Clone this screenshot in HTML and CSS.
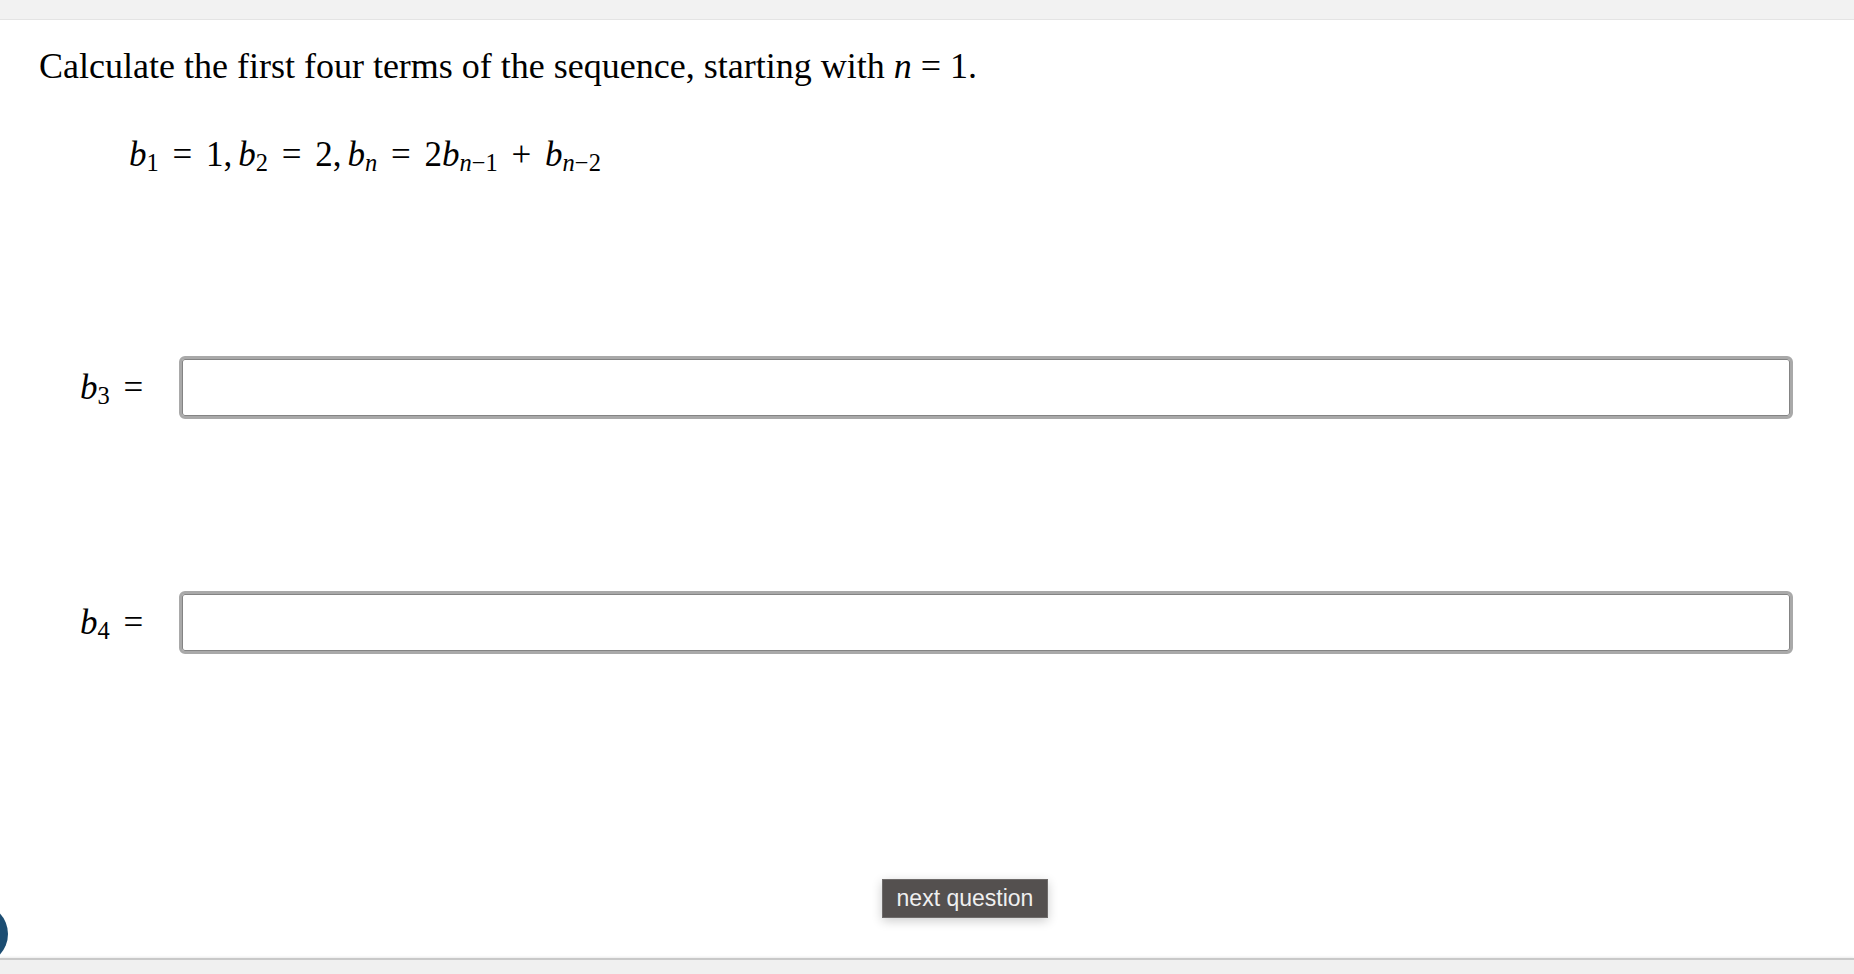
FILE: index.html
```html
<!DOCTYPE html>
<html>
<head>
<meta charset="utf-8">
<link rel="stylesheet" href="styles.css">
</head>
<body>
<div class="topbar"></div>
<main class="page">
  <p class="title">Calculate the first four terms of the sequence, starting with <i>n</i> = 1.</p>
  <p class="formula"><i>b</i><sub>1</sub> <span class="op">=</span> 1,<i class="gap">b</i><sub>2</sub> <span class="op">=</span> 2,<i class="gap">b</i><sub><i>n</i></sub> <span class="op">=</span> 2<i>b</i><sub><i>n</i>−1</sub> <span class="op">+</span> <i>b</i><sub><i>n</i>−2</sub></p>
  <div class="row first">
    <span class="label"><i>b</i><sub>3</sub> <span class="op">=</span></span>
    <input class="answer" type="text">
  </div>
  <div class="row second">
    <span class="label"><i>b</i><sub>4</sub> <span class="op">=</span></span>
    <input class="answer" type="text">
  </div>
  <div class="actions">
    <button class="next">next question</button>
  </div>
  <div class="bubble"></div>
</main>
<footer class="footer"></footer>
</body>
</html>
```
FILE: styles.css
```css
html, body {
  margin: 0;
  padding: 0;
  background: #ffffff;
}
body {
  font-family: "Liberation Serif", "Times New Roman", serif;
  color: #000;
  overflow: hidden;
}
.topbar {
  height: 19px;
  background: #f2f2f2;
  border-bottom: 1px solid #e4e4e4;
}
.page {
  position: relative;
  height: 938px;
  padding-left: 39px;
  box-sizing: border-box;
  overflow: hidden;
  padding-top: 26px;
}
.title {
  margin: 0;
  font-size: 36px;
  line-height: 40px;
}
.formula {
  margin: 49px 0 0 90px;
  font-size: 35px;
  line-height: 40px;
}
.gap {
  margin-left: 6px;
}
sub {
  font-size: 0.7em;
  vertical-align: -0.22em;
  line-height: 0;
}
.op {
  padding: 0 5px;
}
.row {
  display: flex;
  align-items: center;
}
.row.first {
  margin-top: 181px;
}
.row.second {
  margin-top: 172px;
}
.label {
  width: 140px;
  padding-left: 41px;
  box-sizing: border-box;
  font-size: 35px;
  line-height: 40px;
}
.answer {
  width: 1614px;
  height: 63px;
  box-sizing: border-box;
  margin: 0;
  border: 3px solid #a9a9a9;
  border-radius: 6px;
  box-shadow: inset 0 0 0 1px #848484;
  background: #fff;
  outline: none;
}
.actions {
  margin-top: 225px;
  padding-left: 843px;
}
.next {
  margin: 0;
  height: 39px;
  width: 166px;
  padding: 0;
  background: #54504f;
  border: 1px solid #6e6b6a;
  color: #efefef;
  font-family: "Liberation Sans", Arial, sans-serif;
  font-size: 23px;
  box-shadow: 0 3px 10px rgba(0,0,0,0.2);
  cursor: pointer;
}
.bubble {
  position: absolute;
  left: -52px;
  bottom: -6px;
  width: 60px;
  height: 60px;
  border-radius: 50%;
  background: #1c4d72;
}
.footer {
  height: 14px;
  background: #f0f0f0;
  border-top: 2px solid #c9c9c9;
  box-shadow: 0 -1px 2px rgba(0,0,0,0.08);
  position: relative;
}
```
